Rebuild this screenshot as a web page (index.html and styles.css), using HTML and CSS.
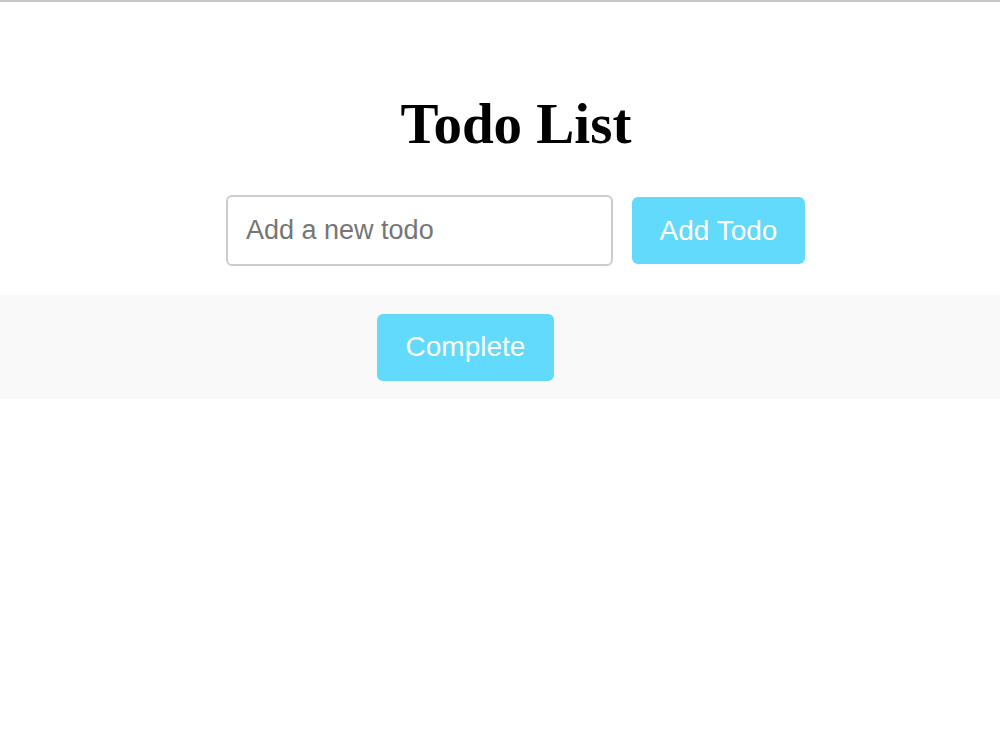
FILE: index.html
```html
<!DOCTYPE html>
<html lang="en">
<head>
<meta charset="utf-8">
<title>Todo List</title>
<link rel="stylesheet" href="styles.css">
</head>
<body>
<div class="app">
  <h1 class="title">Todo List</h1>
  <div class="add-row">
    <input class="todo-input" type="text" placeholder="Add a new todo">
    <button class="btn add-btn">Add Todo</button>
  </div>
  <ul class="todo-list">
    <li class="todo-item">
      <span class="todo-text"></span>
      <button class="btn complete-btn">Complete</button>
    </li>
  </ul>
</div>
</body>
</html>
```
FILE: styles.css
```css
html, body {
  margin: 0;
  padding: 0;
  background: #ffffff;
}
body {
  border-top: 2px solid #c8c8c8;
  font-family: "Liberation Sans", Arial, sans-serif;
}
.app {
  width: 1000px;
}
.title {
  font-family: "Liberation Serif", "Times New Roman", serif;
  font-weight: bold;
  font-size: 57px;
  line-height: 64px;
  text-align: center;
  margin: 90px 0 0 32px;
  color: #000;
}
.add-row {
  display: flex;
  justify-content: center;
  align-items: center;
  gap: 19px;
  margin: 39px 0 0 31px;
}
.todo-input {
  box-sizing: border-box;
  width: 387px;
  height: 71px;
  border: 2px solid #cccccc;
  border-radius: 6px;
  padding: 0 18px;
  font-family: "Liberation Sans", Arial, sans-serif;
  font-size: 27px;
  color: #333;
  outline: none;
}
.todo-input::placeholder {
  color: #767676;
}
.btn {
  box-sizing: border-box;
  height: 67px;
  border: none;
  border-radius: 6px;
  background: #61dafb;
  color: #ffffff;
  font-family: "Liberation Sans", Arial, sans-serif;
  font-size: 28px;
  cursor: pointer;
}
.add-btn {
  width: 173px;
}
.todo-list {
  list-style: none;
  margin: 29px 0 0 0;
  padding: 0;
}
.todo-item {
  display: flex;
  align-items: center;
  background: #f9f9f9;
  height: 104px;
  padding-left: 377px;
  box-sizing: border-box;
}
.todo-text {
  display: none;
}
.complete-btn {
  width: 177px;
}
```
